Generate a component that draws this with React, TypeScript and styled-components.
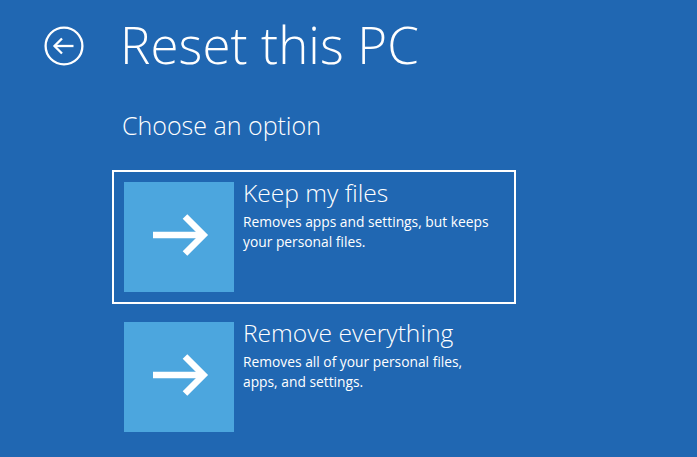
import styled, { createGlobalStyle } from "styled-components";

const GlobalStyle = createGlobalStyle`
  html, body {
    margin: 0;
    padding: 0;
    background: #2067b2;
  }
  body {
    font-family: "Segoe UI", "Open Sans", "Noto Sans", sans-serif;
    color: #ffffff;
  }
`;

type OptionData = {
  title: string;
  lines: string[];
  selected?: boolean;
};

const options: OptionData[] = [
  { title: "Keep my files", lines: ["Removes apps and settings, but keeps", "your personal files."], selected: true },
  { title: "Remove everything", lines: ["Removes all of your personal files,", "apps, and settings."] }
];

const Page = styled.div`
  width: 697px;
  height: 457px;
  overflow: hidden;
  background: #2067b2;
  box-sizing: border-box;
  padding: 26px 0 0 44px;
`;

const Header = styled.header`
  display: flex;
  align-items: flex-start;
  height: 50px;
`;

const BackButton = styled.button`
  width: 40px;
  height: 40px;
  padding: 0;
  margin: 0 36px 0 0;
  border: none;
  background: none;
  display: flex;
  cursor: pointer;
`;

const Title = styled.h1`
  margin: 0;
  margin-top: -14px;
  font-size: 51px;
  font-weight: 300;
  line-height: 64px;
  letter-spacing: 0.1px;
`;

const Subtitle = styled.h2`
  margin: 33px 0 0 78px;
  font-size: 25px;
  font-weight: 300;
  line-height: 32px;
`;

const OptionList = styled.div`
  display: flex;
  flex-direction: column;
  gap: 6px;
  margin: 29px 0 0 68px;
`;

const OptionButton = styled.div<{ $selected?: boolean }>`
  display: flex;
  gap: 9px;
  width: 404px;
  box-sizing: border-box;
  padding: 10px;
  border: 2px solid ${p => (p.$selected ? "#ffffff" : "transparent")};
  cursor: pointer;
`;

const Tile = styled.div`
  width: 110px;
  height: 110px;
  flex: none;
  background: #4ca6de;
  display: flex;
`;

const OptionText = styled.div`
  display: flex;
  flex-direction: column;
`;

const OptionTitle = styled.div`
  font-size: 24.6px;
  font-weight: 300;
  line-height: 30px;
  margin-top: -4px;
`;

const OptionDesc = styled.div`
  font-size: 13.8px;
  font-weight: 400;
  line-height: 19.5px;
  margin-top: 4px;
`;

const BackIcon = () => (
  <svg width="40" height="40" viewBox="0 0 40 40" fill="none" stroke="#fff">
    <circle cx="20" cy="20" r="18.4" strokeWidth="2.3" />
    <path d="M10.5 20 H29.5" strokeWidth="2.3" />
    <path d="M18 12.5 L10.5 20 L18 27.5" strokeWidth="2.3" strokeLinejoin="miter" />
  </svg>
);

const ArrowIcon = () => (
  <svg width="110" height="110" viewBox="0 0 110 110" fill="none" stroke="#fff">
    <path d="M29 53 H77" strokeWidth="6.5" />
    <path d="M61 34.5 L79.5 53 L61 71.5" strokeWidth="6.5" strokeLinejoin="miter" />
  </svg>
);

const App = () => {
  return (
    <>
      <GlobalStyle />
      <Page>
        <Header>
          <BackButton aria-label="Back">
            <BackIcon />
          </BackButton>
          <Title>Reset this PC</Title>
        </Header>
        <Subtitle>Choose an option</Subtitle>
        <OptionList>
          {options.map(option => (
            <OptionButton key={option.title} $selected={option.selected}>
              <Tile>
                <ArrowIcon />
              </Tile>
              <OptionText>
                <OptionTitle>{option.title}</OptionTitle>
                <OptionDesc>
                  {option.lines.map(line => (
                    <div key={line}>{line}</div>
                  ))}
                </OptionDesc>
              </OptionText>
            </OptionButton>
          ))}
        </OptionList>
      </Page>
    </>
  );
};

export default App;
